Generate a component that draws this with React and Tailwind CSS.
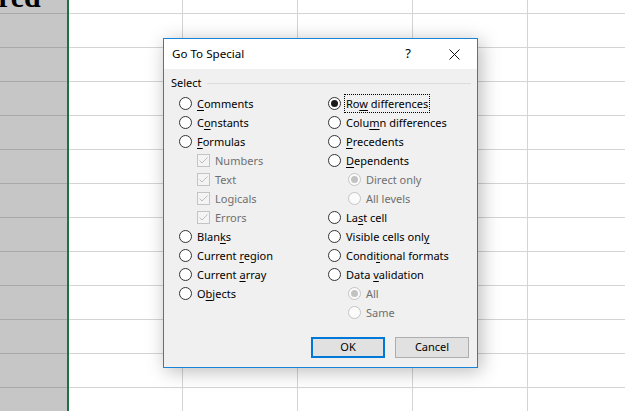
import React from "react";

const FONT = { fontFamily: '"Noto Sans", "Open Sans", sans-serif' };

function Label({ text, u }) {
  if (u === undefined || u < 0) return <span>{text}</span>;
  return (
    <span>
      {text.slice(0, u)}
      <span className="underline underline-offset-2 decoration-1">{text[u]}</span>
      {text.slice(u + 1)}
    </span>
  );
}

function Radio({ checked, disabled }) {
  return (
    <span
      className={
        "flex w-[13px] h-[13px] shrink-0 items-center justify-center rounded-full border " +
        (disabled ? "border-[#c4c4c4] bg-[#fbfbfb]" : "border-[#333333] bg-white")
      }
    >
      {checked && (
        <span
          className={
            "w-[7px] h-[7px] rounded-full " + (disabled ? "bg-[#c2c2c2]" : "bg-[#1a1a1a]")
          }
        />
      )}
    </span>
  );
}

function Check() {
  return (
    <span className="flex w-[13px] h-[13px] shrink-0 items-center justify-center border border-[#c4c4c4] bg-[#f4f4f4]">
      <svg width="11" height="11" viewBox="0 0 11 11">
        <polyline points="1.5,5.5 4,8 9.5,2.5" fill="none" stroke="#bdbdbd" strokeWidth="1" />
      </svg>
    </span>
  );
}

function Row({ item }) {
  const { text, u, kind, checked, sub, focus, indent } = item;
  const disabled = sub;
  return (
    <div className="flex h-[19px] items-center">
      <div
        className={
          "flex items-center gap-[5px] " +
          (indent === "l" ? "pl-[18px]" : indent === "r" ? "pl-[20px]" : "")
        }
      >
        {kind === "check" ? <Check /> : <Radio checked={checked} disabled={disabled} />}
        <span
          className={
            "leading-[15px] " +
            (disabled ? "text-[#6f6f6f] " : "text-black ") +
            (focus ? "outline-1 outline-dotted outline-black outline-offset-[1px]" : "")
          }
        >
          <Label text={text} u={disabled ? -1 : u} />
        </span>
      </div>
    </div>
  );
}

const left = [
  { text: "Comments", u: 0 },
  { text: "Constants", u: 1 },
  { text: "Formulas", u: 0 },
  { text: "Numbers", kind: "check", sub: true, indent: "l" },
  { text: "Text", kind: "check", sub: true, indent: "l" },
  { text: "Logicals", kind: "check", sub: true, indent: "l" },
  { text: "Errors", kind: "check", sub: true, indent: "l" },
  { text: "Blanks", u: 4 },
  { text: "Current region", u: 8 },
  { text: "Current array", u: 8 },
  { text: "Objects", u: 1 },
];

const right = [
  { text: "Row differences", u: 2, checked: true, focus: true },
  { text: "Column differences", u: 4 },
  { text: "Precedents", u: 0 },
  { text: "Dependents", u: 0 },
  { text: "Direct only", sub: true, checked: true, indent: "r" },
  { text: "All levels", sub: true, indent: "r" },
  { text: "Last cell", u: 2 },
  { text: "Visible cells only", u: 17 },
  { text: "Conditional formats", u: 5 },
  { text: "Data validation", u: 5 },
  { text: "All", sub: true, checked: true, indent: "r" },
  { text: "Same", sub: true, indent: "r" },
];

const rowHeights = [14, 34, 34, 34, 34, 34, 34, 34, 34, 34, 34, 34, 34];
const colWidths = [114, 115, 115, 115, 115];

export default function App() {
  return (
    <div className="relative w-[625px] h-[411px] overflow-hidden bg-white flex" style={FONT}>
      {/* gray frozen column */}
      <div className="w-[67px] shrink-0 bg-[#c6c6c6] flex flex-col">
        {rowHeights.map((h, i) => (
          <div
            key={i}
            className="shrink-0 border-b border-[#a9a9a9] overflow-hidden"
            style={{ height: h }}
          >
            {i === 0 && (
              <div
                className="-mt-[18px] -ml-[2px] text-[30px] leading-[30px] font-bold text-black whitespace-nowrap"
                style={{ fontFamily: '"Liberation Serif", serif' }}
              >
                red
              </div>
            )}
          </div>
        ))}
      </div>
      <div className="w-[2px] shrink-0 bg-[#1e7145]" />
      {/* cells */}
      <div className="flex-1 flex flex-col">
        {rowHeights.map((h, i) => (
          <div key={i} className="flex shrink-0" style={{ height: h }}>
            {colWidths.map((w, j) => (
              <div
                key={j}
                className="shrink-0 border-r border-b border-[#d4d4d4]"
                style={{ width: w }}
              />
            ))}
            <div className="flex-1 border-b border-[#d4d4d4]" />
          </div>
        ))}
      </div>

      {/* dialog */}
      <div className="absolute left-[163px] top-[38px] w-[315px] h-[330px] border border-[#1883d7] bg-[#f0f0f0] flex flex-col text-[11px] text-black shadow-[3px_3px_18px_rgba(0,0,0,0.28)]">
        <div className="h-[30px] bg-white flex items-center shrink-0">
          <span className="pl-[8px] text-[11.6px]">Go To Special</span>
          <span className="ml-auto w-[46px] flex justify-center text-[13px]">?</span>
          <span className="w-[46px] flex justify-center">
            <svg width="11" height="11" viewBox="0 0 11 11">
              <path d="M0.5 0.5 L10.5 10.5 M10.5 0.5 L0.5 10.5" stroke="#111" strokeWidth="1" />
            </svg>
          </span>
        </div>
        <div className="h-[25px] flex items-center pt-[3px] pl-[7px] pr-[6px] gap-[5px] shrink-0">
          <span>Select</span>
          <span className="flex-1 h-px bg-[#dcdcdc]" />
        </div>
        <div className="grid grid-cols-[149px_1fr] pl-[15px]">
          <div className="flex flex-col">
            {left.map((it) => (
              <Row key={it.text} item={it} />
            ))}
          </div>
          <div className="flex flex-col">
            {right.map((it) => (
              <Row key={it.text} item={it} />
            ))}
          </div>
        </div>
        <div className="mt-auto flex justify-end gap-[10px] pr-[8px] pb-[9px]">
          <button className="w-[74px] h-[21px] border-2 border-[#0078d7] bg-[#e1e1e1] text-[11px] flex items-center justify-center">
            OK
          </button>
          <button className="w-[74px] h-[21px] border border-[#adadad] bg-[#e1e1e1] text-[11px] flex items-center justify-center">
            Cancel
          </button>
        </div>
      </div>
    </div>
  );
}
